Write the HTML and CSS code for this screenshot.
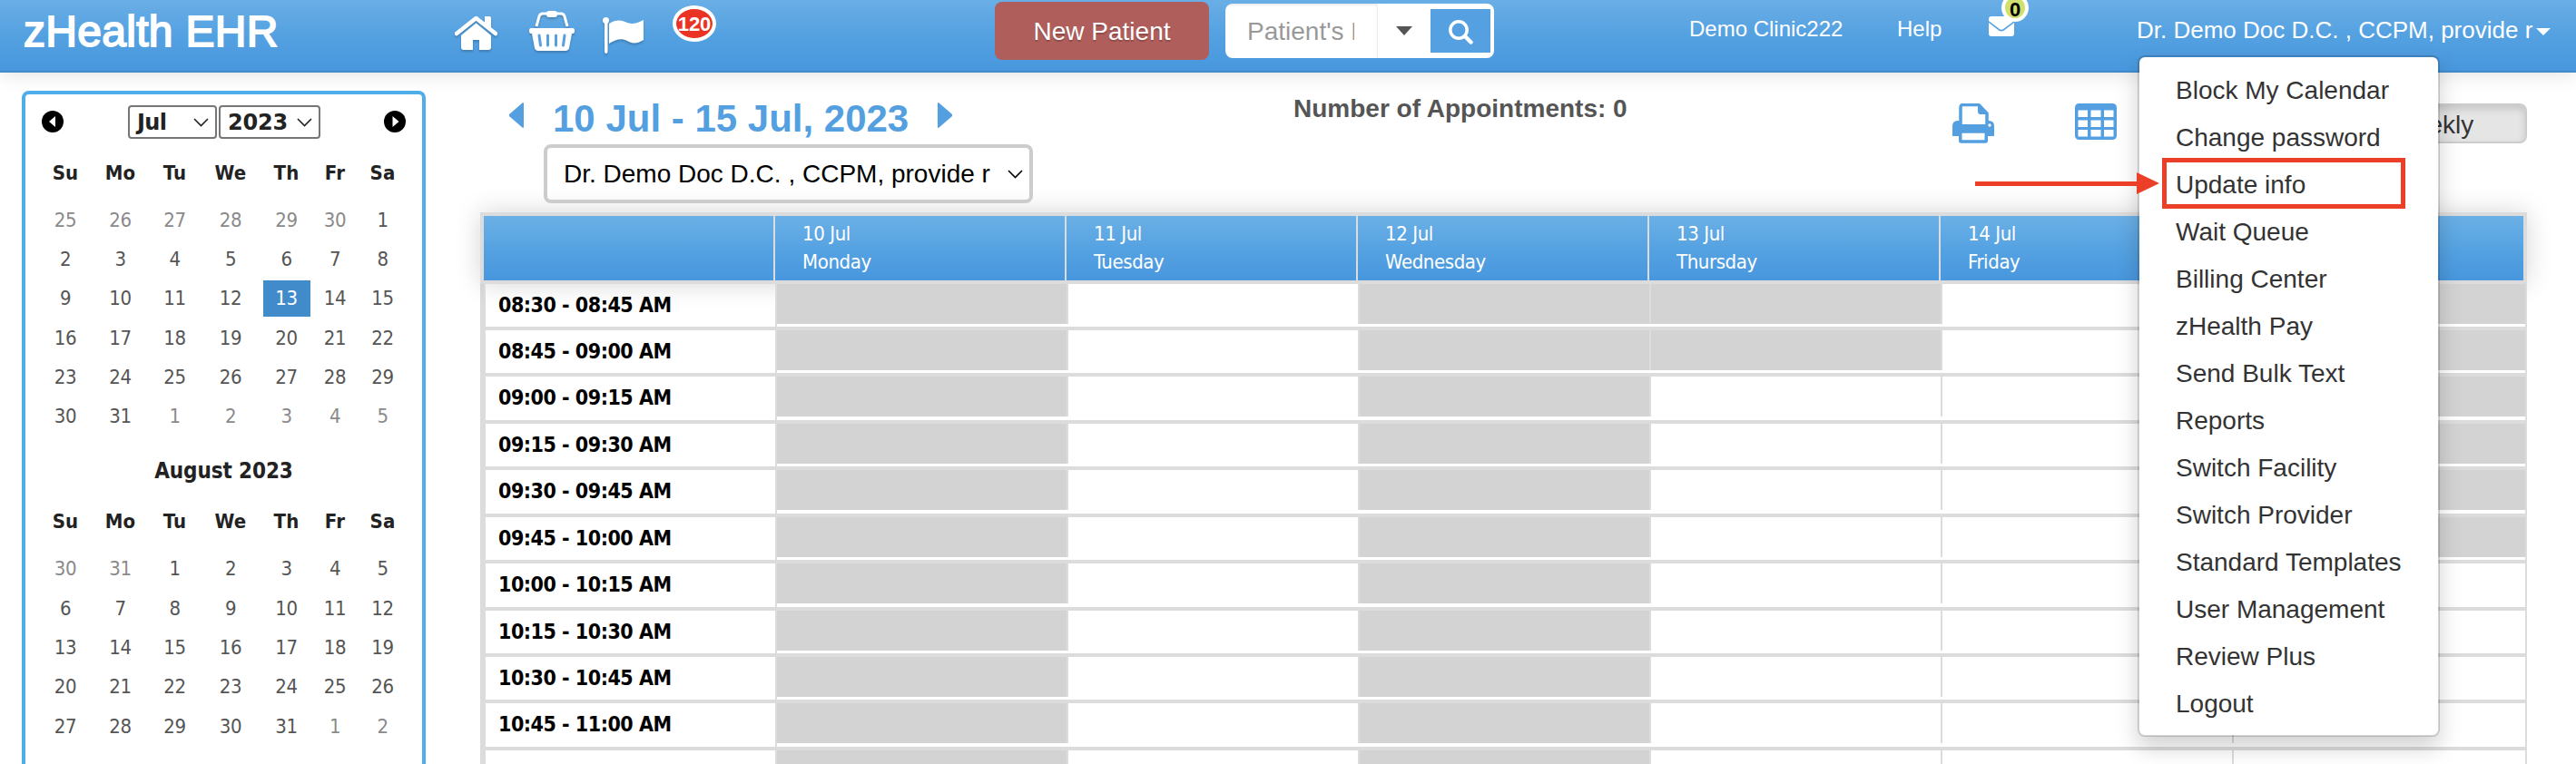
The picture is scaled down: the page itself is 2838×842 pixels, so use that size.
FILE: index.html
```html
<!DOCTYPE html>
<html lang="en">
<head>
<meta charset="utf-8">
<title>zHealth EHR</title>
<link rel="stylesheet" href="styles.css">
</head>
<body>
<header class="topbar">
  <div class="brand">zHealth EHR</div>
  <nav class="quick">
    <svg class="ico home" viewBox="0 0 47 38" width="47" height="38"><path d="M2 19 23.500 2 45 19" fill="none" stroke="#fff" stroke-width="4.500" stroke-linecap="round" stroke-linejoin="round"/><path d="M33 0h5q2 0 2 2v12l-7-6zM23.500 7.500 7 21v13q0 3 3 3h10V26h7v11h10q3 0 3-3V21z" fill="#fff"/></svg>
    <svg class="ico basket" viewBox="0 0 50 45" width="50" height="45"><path d="M8 17 11 6q1-3 4-3h20q3 0 4 3l3 11" fill="none" stroke="#fff" stroke-width="3"/><rect x="19" y="0" width="12" height="7" rx="3" fill="#fff"/><path d="M2 19h46q2 0 2 3t-2 3h-1l-3 16q-1 3-4 3H10q-3 0-4-3L3 25H2q-2 0-2-3t2-3z" fill="#fff"/><path d="m11 27 1.500 11M20.500 27v11M29.500 27v11M39 27l-1.500 11" stroke="#55a0e1" stroke-width="3" stroke-linecap="round"/></svg>
    <svg class="ico flag" viewBox="0 0 45 40" width="45" height="40"><circle cx="3.500" cy="3.500" r="3.500" fill="#fff"/><path d="M2 4h3.500v34q0 2-1.700 2T2 38zM7 7c8-5 14-4 20-1 6 2 10 1 18-3v22c-8 5-13 4-18 1-6-3-12-2-20 3z" fill="#fff"/></svg>
    <span class="count">120</span>
  </nav>
  <div class="new-patient">New Patient</div>
  <div class="search">
    <div class="search-input"><span>Patient's N</span></div>
    <div class="search-drop"><svg width="18" height="10" viewBox="0 0 18 10"><path d="M0 0h18L9 10z" fill="#555"/></svg></div>
    <div class="search-btn"><svg width="27" height="27" viewBox="0 0 27 27" fill="none" stroke="#fff"><circle cx="11" cy="11" r="9.200" stroke-width="3.500"/><path d="m18 18 6.500 6.500" stroke-width="4.500" stroke-linecap="round"/></svg></div>
  </div>
  <span class="clinic">Demo Clinic222</span>
  <span class="help">Help</span>
  <div class="mail">
    <svg width="28" height="22" viewBox="0 0 28 22"><path d="M3 0h22q3 0 3 3v2L16 14q-2 1.500-4 0L0 5V3q0-3 3-3zM0 7l11 8.500q3 2 6 0L28 7v12q0 3-3 3H3q-3 0-3-3z" fill="#fff"/></svg>
    <span class="mail-count">0</span>
  </div>
  <div class="user">Dr. Demo Doc D.C. , CCPM, provide r<svg width="16" height="8" viewBox="0 0 16 8"><path d="M0 0h16L8 8z" fill="#fff"/></svg></div>
  <ul class="menu">
    <li>Block My Calendar</li><li>Change password</li><li><span class="marked">Update info</span></li><li>Wait Queue</li><li>Billing Center</li><li>zHealth Pay</li><li>Send Bulk Text</li><li>Reports</li><li>Switch Facility</li><li>Switch Provider</li><li>Standard Templates</li><li>User Management</li><li>Review Plus</li><li>Logout</li>
  </ul>
  <svg class="arrow" width="203" height="24" viewBox="0 0 203 24"><path d="M0 10h178V0l25 12-25 12v-9H0z" fill="#eb4027"/></svg>
</header>

<main class="page">
  <aside class="side">
    <div class="pick">
      <svg width="24" height="24" viewBox="0 0 24 24"><circle cx="12" cy="12" r="12"/><path d="M15 6v12l-7-6z" fill="#fff"/></svg>
      <div class="selects">
        <div class="sel month">Jul<svg width="17" height="10" viewBox="0 0 17 10"><path d="m1 1 7.500 7.500L16 1" fill="none" stroke="#222" stroke-width="1.600"/></svg></div>
        <div class="sel year">2023<svg width="17" height="10" viewBox="0 0 17 10"><path d="m1 1 7.500 7.500L16 1" fill="none" stroke="#222" stroke-width="1.600"/></svg></div>
      </div>
      <svg width="24" height="24" viewBox="0 0 24 24"><circle cx="12" cy="12" r="12"/><path d="M9.500 6v12l7-6z" fill="#fff"/></svg>
    </div>
    <div class="days names"><b>Su</b><b>Mo</b><b>Tu</b><b>We</b><b>Th</b><b>Fr</b><b>Sa</b></div>
    <div class="days">
      <i>25</i><i>26</i><i>27</i><i>28</i><i>29</i><i>30</i><span>1</span>
      <span>2</span><span>3</span><span>4</span><span>5</span><span>6</span><span>7</span><span>8</span>
      <span>9</span><span>10</span><span>11</span><span>12</span><span class="today">13</span><span>14</span><span>15</span>
      <span>16</span><span>17</span><span>18</span><span>19</span><span>20</span><span>21</span><span>22</span>
      <span>23</span><span>24</span><span>25</span><span>26</span><span>27</span><span>28</span><span>29</span>
      <span>30</span><span>31</span><i>1</i><i>2</i><i>3</i><i>4</i><i>5</i>
    </div>
    <div class="month-title">August 2023</div>
    <div class="days names"><b>Su</b><b>Mo</b><b>Tu</b><b>We</b><b>Th</b><b>Fr</b><b>Sa</b></div>
    <div class="days">
      <i>30</i><i>31</i><span>1</span><span>2</span><span>3</span><span>4</span><span>5</span>
      <span>6</span><span>7</span><span>8</span><span>9</span><span>10</span><span>11</span><span>12</span>
      <span>13</span><span>14</span><span>15</span><span>16</span><span>17</span><span>18</span><span>19</span>
      <span>20</span><span>21</span><span>22</span><span>23</span><span>24</span><span>25</span><span>26</span>
      <span>27</span><span>28</span><span>29</span><span>30</span><span>31</span><i>1</i><i>2</i>
    </div>
  </aside>

  <section class="board">
    <div class="tools">
      <div class="range">
        <div class="range-row">
          <svg width="16" height="28" viewBox="0 0 16 28"><path d="M16 1v26q0 1-1 1L0 15v-2L15 0q1 0 1 1z" fill="#549fe0"/></svg>
          <h1>10 Jul - 15 Jul, 2023</h1>
          <svg width="16" height="28" viewBox="0 0 16 28"><path d="M0 1v26q0 1 1 1l15-13v-2L1 0Q0 0 0 1z" fill="#549fe0"/></svg>
        </div>
        <div class="provider">Dr. Demo Doc D.C. , CCPM, provide r<svg width="17" height="10" viewBox="0 0 17 10"><path d="m1 1 7.500 7.500L16 1" fill="none" stroke="#000" stroke-width="1.600"/></svg></div>
      </div>
      <div class="total">Number of Appointments: 0</div>
      <svg class="print" width="46" height="44" viewBox="0 0 46 44"><path d="M9 23V4q0-2.500 2.500-2.500H29L38 11v12" fill="#fff" stroke="#549fe0" stroke-width="3.500"/><path d="M28 2h2l9 9v1h-8q-3 0-3-3zM0 36V25q0-6 6-6h2v4h30v-4h2q6 0 6 6v11z" fill="#549fe0"/><circle cx="41" cy="24" r="1.700" fill="#fff"/><rect x="8.750" y="31" width="28.500" height="11" rx="1" fill="#fff" stroke="#549fe0" stroke-width="3.500"/></svg>
      <svg class="grid-ico" width="46" height="40" viewBox="0 0 46 40"><rect width="46" height="40" rx="4.500" fill="#549fe0"/><path d="M3.500 7.500H14V15H3.500zM17.500 7.500h11V15h-11zM32 7.500h10.500V15H32zM3.500 18.500H14V26H3.500zM17.500 18.500h11V26h-11zM32 18.500h10.500V26H32zM3.500 29H14v7.500H3.500zM17.500 29h11v7.500h-11zM32 29h10.500v7.500H32z" fill="#fff"/></svg>
      <div class="weekly">Weekly</div>
    </div>
    <div class="schedule">
      <div class="head"><div></div><div>10 Jul<br>Monday</div><div>11 Jul<br>Tuesday</div><div>12 Jul<br>Wednesday</div><div>13 Jul<br>Thursday</div><div>14 Jul<br>Friday</div><div></div></div>
      <div class="row"><b>08:30 - 08:45 AM</b><p class="off"></p><p></p><p class="off"></p><p class="off"></p><p></p><p class="off"></p></div>
      <div class="row"><b>08:45 - 09:00 AM</b><p class="off"></p><p></p><p class="off"></p><p class="off"></p><p></p><p class="off"></p></div>
      <div class="row tall"><b>09:00 - 09:15 AM</b><p class="off"></p><p></p><p class="off"></p><p></p><p></p><p class="off"></p></div>
      <div class="row"><b>09:15 - 09:30 AM</b><p class="off"></p><p></p><p class="off"></p><p></p><p></p><p class="off"></p></div>
      <div class="row tall"><b>09:30 - 09:45 AM</b><p class="off"></p><p></p><p class="off"></p><p></p><p></p><p class="off"></p></div>
      <div class="row"><b>09:45 - 10:00 AM</b><p class="off"></p><p></p><p class="off"></p><p></p><p></p><p class="off"></p></div>
      <div class="row tall"><b>10:00 - 10:15 AM</b><p class="off"></p><p></p><p class="off"></p><p></p><p></p><p></p></div>
      <div class="row"><b>10:15 - 10:30 AM</b><p class="off"></p><p></p><p class="off"></p><p></p><p></p><p></p></div>
      <div class="row"><b>10:30 - 10:45 AM</b><p class="off"></p><p></p><p class="off"></p><p></p><p></p><p></p></div>
      <div class="row tall"><b>10:45 - 11:00 AM</b><p class="off"></p><p></p><p class="off"></p><p></p><p></p><p></p></div>
      <div class="row last"><b></b><p class="off"></p><p></p><p class="off"></p><p></p><p></p><p></p></div>
    </div>
  </section>
</main>
</body>
</html>
```

FILE: styles.css
```css
* { box-sizing: border-box; }
body { margin: 0; height: 842px; overflow: hidden; background: #fff; font-family: "Liberation Sans", Arial, sans-serif; font-size: 28px; white-space: nowrap; }
svg { flex: none; display: block; }

/* Top bar */
.topbar { position: relative; z-index: 2; display: flex; align-items: flex-start; height: 80px; padding-left: 25px; color: #fff; background: linear-gradient(#6aaee6, #54a1e1 50%, #4897de); border-bottom: 2px solid #428bca; box-shadow: 0 2px 20px rgba(0,0,0,.12); }
.brand { width: 476px; font-size: 48px; line-height: 56px; padding: 7px 0 0 1px; letter-spacing: .3px; -webkit-text-stroke: 1.8px #fff; }
.quick { display: flex; align-items: flex-start; width: 595px; }
.ico { filter: drop-shadow(0 2px 1px rgba(0,0,0,.2)); }
.home { margin-top: 18px; }
.basket { margin: 12px 0 0 35px; }
.flag { margin: 19px 0 0 31px; }
.count { width: 48px; height: 40px; margin: 6px 0 0 32px; border: 4px solid #fff; border-radius: 50%; background: #eb3323; font: bold 22px/33px "Liberation Sans", sans-serif; text-align: center; }
.new-patient { width: 236px; height: 64px; margin-top: 2px; line-height: 65px; text-align: center; border-radius: 8px; background: #b05e5b; text-shadow: 0 2px 1px rgba(0,0,0,.2); }
.search { display: flex; width: 296px; height: 60px; margin: 4px 0 0 18px; padding-right: 4px; border-radius: 8px; background: #fff; overflow: hidden; }
.search-input { width: 168px; padding-left: 24px; line-height: 61px; color: #999; border-right: 1px solid #eee; box-shadow: inset 0 2px 2px rgba(0,0,0,.08); }
.search-input span { display: block; width: 118px; overflow: hidden; }
.search-drop { flex: 1; padding: 25px 0 0 20px; }
.search-btn { width: 66px; height: 48px; margin-top: 6px; padding: 12px 0 0 20px; background: #54a0e1; }
.clinic, .help { font-size: 24px; line-height: 28px; margin-top: 18px; }
.clinic { width: 229px; margin-left: 215px; }
.help { width: 101px; }
.mail { position: relative; width: 163px; padding-top: 18px; }
.mail-count { position: absolute; left: 14px; top: -7px; width: 30px; height: 31px; border: 4px solid #fff; border-radius: 50%; background: #cfe06f; color: #000; font: bold 22px/27px "Liberation Sans", sans-serif; text-align: center; }
.user { display: flex; align-items: flex-start; gap: 4px; font-size: 26px; line-height: 30px; padding-top: 18px; }
.user svg { margin-top: 13px; }
.menu { position: absolute; left: 2355px; top: 61px; width: 333px; height: 751px; margin: 0; padding: 11px 0 0 40px; list-style: none; color: #333; background: #fff; background-clip: padding-box; border: 2px solid rgba(0,0,0,.16); border-radius: 8px; box-shadow: 0 12px 24px rgba(0,0,0,.18); }
.menu li { display: flex; height: 52px; line-height: 52px; }
.marked { width: 268px; height: 56px; margin: -4px 0 0 -15px; padding-left: 10px; line-height: 49px; border: 5px solid #eb4027; }
.arrow { position: absolute; left: 2176px; top: 190px; }

.page { display: flex; height: 762px; padding-left: 24px; overflow: hidden; }

/* Mini calendars */
.side { width: 445px; height: 742px; margin-top: 20px; padding-top: 12px; border: 4px solid #4fadea; border-bottom: 0; border-radius: 8px 8px 0 0; color: #222; font-family: "DejaVu Sans Condensed", "DejaVu Sans", sans-serif; font-stretch: condensed; overflow: hidden; }
.pick { display: flex; justify-content: space-between; padding: 0 18px; height: 37px; }
.pick > svg { margin-top: 6px; }
.selects { display: flex; gap: 2px; margin-left: 1px; }
.sel { display: flex; justify-content: space-between; align-items: center; height: 37px; padding: 0 7px 0 8px; border: 2px solid #767676; border-radius: 4px; font: bold 24px "DejaVu Sans", sans-serif; }
.month { width: 98px; letter-spacing: -.6px; }
.year { width: 112px; letter-spacing: -.2px; }
.days { display: grid; grid-template-columns: 58px 63px 57px 66px 57px 50px 55px; grid-auto-rows: 43.300px; padding-left: 15px; font-size: 22px; line-height: 40px; text-align: center; letter-spacing: -.4px; color: #555; }
.days > * { margin: 1.700px 2.500px; font-style: normal; }
.days i { color: #8a8a8a; }
.days .today { background: #428bca; color: #fff; }
.names { height: 68px; padding-top: 16px; color: #222; letter-spacing: .2px; }
.month-title { height: 57px; line-height: 76px; text-align: center; font-size: 24px; font-weight: bold; letter-spacing: -.1px; }

/* Schedule */
.board { width: 2255px; margin-left: 60px; }
.tools { display: flex; align-items: flex-start; height: 154px; padding-left: 32px; }
.range { width: 864px; }
.range-row { display: flex; padding-top: 33px; height: 79px; }
h1 { width: 456px; margin: -6px 0 0; padding-left: 32px; font-size: 42px; line-height: 48px; color: #549fe0; }
.provider { display: flex; justify-content: space-between; align-items: center; width: 539px; height: 65px; margin-left: 38px; padding: 0 7px 0 18px; border: 4px solid #ccc; border-radius: 8px; }
.total { width: 726px; margin-top: 24px; line-height: 32px; font-weight: bold; color: #555; }
.print { margin-top: 34px; }
.grid-ico { margin: 34px 0 0 89px; }
.weekly { width: 170px; height: 44px; margin: 34px 0 0 282px; padding-left: 18px; line-height: 43px; color: #333; background: #e5e5e5; border: 2px solid #ccc; border-radius: 8px; box-shadow: inset 0 4px 8px rgba(0,0,0,.14); }
.schedule { height: 608px; border-left: 4px solid #dcdcdc; font-family: "DejaVu Sans Condensed", "DejaVu Sans", sans-serif; font-stretch: condensed; }
.head { display: grid; grid-template-columns: repeat(6, 321px) 1fr; height: 79px; margin-left: -4px; border: 4px solid #dcdcdc; background: linear-gradient(#6bb0e6, #54a1e1 55%, #4897de); box-shadow: 0 0 28px rgba(0,0,0,.17); font-size: 22px; line-height: 31px; color: #fff; letter-spacing: -.4px; }
.head div { padding: 4px 0 0 30px; border-right: 2px solid #dcdcdc; }
.head div:last-child { border-right: 0; }
.row { display: grid; grid-template-columns: repeat(7, 321px); height: 51px; border: solid #dcdcdc; border-width: 0 2px 4px; }
.row.tall { height: 52px; }
.row.last { height: 15px; border-bottom: 0; overflow: hidden; }
.row b { padding-left: 14px; border-right: 2px solid #dcdcdc; font-size: 23px; line-height: 47px; color: #000; letter-spacing: -.5px; }
.row p { height: 44px; margin: 0; border-right: 2px solid #dcdcdc; background: #fff; }
.row p:last-child { border-right: 0; }
.row .off { background: #d3d3d3; }
```
